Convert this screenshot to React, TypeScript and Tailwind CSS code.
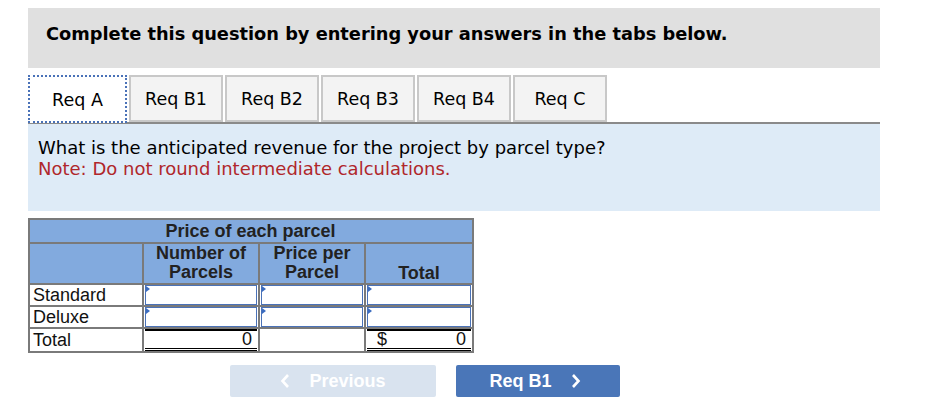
const tabs = ["Req A", "Req B1", "Req B2", "Req B3", "Req B4", "Req C"];

function InputCell() {
    return (
        <td className="border-2 border-[#7a7a7a] bg-white p-0 h-[22px]">
            <div className="relative mx-[1px] h-[20px] border border-[#4a72b8] bg-white">
                <div className="absolute left-0 top-0 h-0 w-0 border-t-[3px] border-b-[3px] border-l-[4px] border-t-transparent border-b-transparent border-l-[#3b6cc0]" />
            </div>
        </td>
    );
}

export default function App() {
    return (
        <div className="w-[928px] h-[420px] bg-white pt-2 pl-7" style={{ fontFamily: "'DejaVu Sans', Verdana, sans-serif" }}>
            <div className="w-[852px] h-[60px] bg-[#e0e0e0] pl-[18px] pt-[14px]">
                <h1 className="text-[17.8px] font-bold text-black leading-[24px]">
                    Complete this question by entering your answers in the tabs below.
                </h1>
            </div>

            <div className="w-[852px] mt-[7px] flex border-b-2 border-[#8a8a8a]">
                {tabs.map((t, i) =>
                    i === 0 ? (
                        <div key={t} className="w-[99px] h-[48px] -mb-[2px] bg-white border-2 border-dotted border-[#4a72b8] flex items-center justify-center pt-[2px] text-[17.5px] text-black">
                            {t}
                        </div>
                    ) : (
                        <div key={t} className="w-[94px] h-[47px] ml-[2px] bg-[#f3f3f3] border-2 border-[#c8c8c8] flex items-center justify-center pt-[2px] text-[17.5px] text-black">
                            {t}
                        </div>
                    )
                )}
            </div>

            <div className="w-[852px] h-[87px] bg-[#deebf7] pl-[10px] pt-[13px] text-[18px] leading-[21px]">
                <p className="text-black">What is the anticipated revenue for the project by parcel type?</p>
                <p className="text-[#b0272b]">Note: Do not round intermediate calculations.</p>
            </div>

            <table
                className="mt-[7px] border-collapse border-2 border-[#7a7a7a] text-[18px] leading-[18px] text-[#111]"
                style={{ fontFamily: "'Liberation Sans', Arial, sans-serif" }}
            >
                <colgroup>
                    <col className="w-[114px]" />
                    <col className="w-[116px]" />
                    <col className="w-[106px]" />
                    <col className="w-[108px]" />
                </colgroup>
                <thead className="bg-[#82aade] font-bold text-[#222]">
                    <tr className="h-[24px]">
                        <th className="border-b-2 border-[#7a7a7a] p-0"></th>
                        <th colSpan={2} className="border-b-2 border-[#7a7a7a] p-0 pr-[7px] text-center font-bold">
                            Price of each parcel
                        </th>
                        <th className="border-b-2 border-[#7a7a7a] p-0"></th>
                    </tr>
                    <tr className="h-[41px]">
                        <th className="border-2 border-[#7a7a7a] p-0"></th>
                        <th className="border-2 border-[#7a7a7a] p-0 align-bottom text-center font-bold leading-[19px] pb-[1px]">
                            Number of
                            <br />
                            Parcels
                        </th>
                        <th className="border-2 border-[#7a7a7a] p-0 align-bottom text-center font-bold leading-[19px] pb-[1px]">
                            Price per
                            <br />
                            Parcel
                        </th>
                        <th className="border-2 border-[#7a7a7a] p-0 align-bottom text-center font-bold pb-[1px]">Total</th>
                    </tr>
                </thead>
                <tbody>
                    {["Standard", "Deluxe"].map((r) => (
                        <tr key={r}>
                            <td className="border-2 border-[#7a7a7a] bg-white px-[3px] py-0 h-[22px]">{r}</td>
                            <InputCell />
                            <InputCell />
                            <InputCell />
                        </tr>
                    ))}
                    <tr>
                        <td className="border-2 border-[#7a7a7a] bg-white px-[3px] py-0 h-[22px]">Total</td>
                        <td className="border-2 border-[#7a7a7a] bg-white p-0 h-[22px]">
                            <div className="mx-[1px] border-t-2 border-b-[3px] border-double border-t-black border-b-black text-right pr-[5px] leading-[17px]">
                                0
                            </div>
                        </td>
                        <td className="border-2 border-[#7a7a7a] bg-white p-0 h-[22px]"></td>
                        <td className="border-2 border-[#7a7a7a] bg-white p-0 h-[22px]">
                            <div className="mx-[1px] border-t-2 border-b-[3px] border-double border-t-black border-b-black flex justify-between pl-[10px] pr-[5px] leading-[17px]">
                                <span>$</span>
                                <span>0</span>
                            </div>
                        </td>
                    </tr>
                </tbody>
            </table>

            <div className="mt-[12px] flex" style={{ fontFamily: "'Liberation Sans', Arial, sans-serif" }}>
                <button className="ml-[202px] w-[206px] h-[32px] rounded-[2px] bg-[#d9e3ef] text-white font-bold text-[18px] flex items-center justify-center gap-[19px]">
                    <svg width="10" height="16" viewBox="0 0 10 16">
                        <path d="M8 2 L2.5 8 L8 14" stroke="white" strokeWidth="2.6" fill="none" />
                    </svg>
                    Previous
                </button>
                <button className="ml-[20px] w-[164px] h-[32px] rounded-[2px] bg-[#4a76b8] text-white font-bold text-[18px] flex items-center justify-center gap-[19px] pr-[6px]">
                    Req B1
                    <svg width="10" height="16" viewBox="0 0 10 16">
                        <path d="M2 2 L7.5 8 L2 14" stroke="white" strokeWidth="2.6" fill="none" />
                    </svg>
                </button>
            </div>
        </div>
    );
}
